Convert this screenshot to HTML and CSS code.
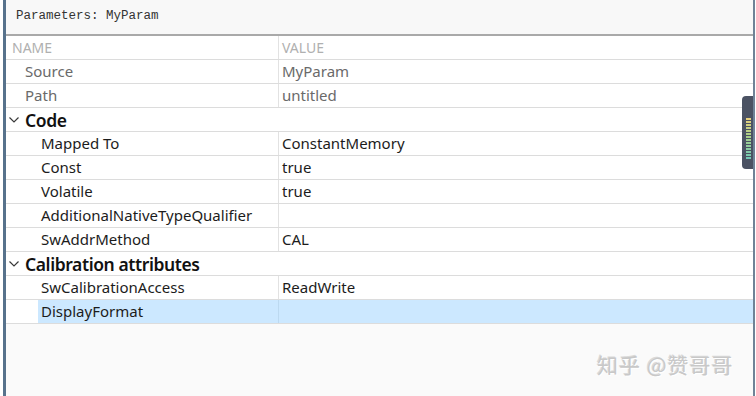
FILE: index.html
```html
<!DOCTYPE html>
<html lang="en">
<head>
  <meta charset="UTF-8">
  <title>Parameters: MyParam</title>
  <link rel="stylesheet" href="styles.css">
</head>
<body>
  <div class="panel">
    <div class="title">Parameters: MyParam</div>

    <div class="grid">
      <div class="row head">
        <div class="name">NAME</div>
        <div class="value">VALUE</div>
      </div>
      <div class="row info">
        <div class="name lvl1">Source</div>
        <div class="value">MyParam</div>
      </div>
      <div class="row info">
        <div class="name lvl1">Path</div>
        <div class="value">untitled</div>
      </div>

      <div class="row group">
        <div class="name">
          <svg class="chev" width="10" height="6" viewBox="0 0 10 6"><path d="M0.5 0.5 L5 5 L9.5 0.5" fill="none" stroke="#3a3a3a" stroke-width="1.2"/></svg>Code
        </div>
      </div>
      <div class="row">
        <div class="name lvl2">Mapped To</div>
        <div class="value">ConstantMemory</div>
      </div>
      <div class="row">
        <div class="name lvl2">Const</div>
        <div class="value">true</div>
      </div>
      <div class="row">
        <div class="name lvl2">Volatile</div>
        <div class="value">true</div>
      </div>
      <div class="row">
        <div class="name lvl2">AdditionalNativeTypeQualifier</div>
        <div class="value"></div>
      </div>
      <div class="row">
        <div class="name lvl2">SwAddrMethod</div>
        <div class="value">CAL</div>
      </div>

      <div class="row group">
        <div class="name">
          <svg class="chev" width="10" height="6" viewBox="0 0 10 6"><path d="M0.5 0.5 L5 5 L9.5 0.5" fill="none" stroke="#3a3a3a" stroke-width="1.2"/></svg>Calibration attributes
        </div>
      </div>
      <div class="row">
        <div class="name lvl2">SwCalibrationAccess</div>
        <div class="value">ReadWrite</div>
      </div>
      <div class="row selected">
        <div class="name lvl2">DisplayFormat</div>
        <div class="value"></div>
      </div>
    </div>

    <div class="thumb"><div class="bars"></div></div>
    <div class="mark">知乎 @赞哥哥</div>
  </div>
</body>
</html>
```

FILE: styles.css
```css
body {
  margin: 0;
  font-family: "Noto Sans", "Open Sans", sans-serif;
  background: #fff;
}

.panel {
  position: relative;
  height: 396px;
  margin-left: 3px;
  margin-right: 1px;
  border-left: 3px solid #57728c;
  border-right: 2px solid #6f8397;
  background: #fafafa;
  overflow: hidden;
}

.title {
  height: 34px;
  padding-left: 10px;
  line-height: 33px;
  font-family: "Liberation Mono", monospace;
  font-size: 12.5px;
  color: #333;
  background: #f8f8f8;
  border-bottom: 2px solid #a9a9a9;
}

.grid {
  background: #fff;
}

.row {
  display: grid;
  grid-template-columns: 273px 1fr;
  height: 23px;
  border-bottom: 1px solid #dcdcdc;
  font-size: 15px;
  line-height: 23px;
  color: #1c1c1c;
}

.row .name {
  white-space: nowrap;
  border-right: 1px solid #e2e2e2;
}

.row .value {
  padding-left: 3px;
}

.head {
  font-size: 14px;
  color: #b0b0b0;
}
.head .name { padding-left: 6px; }

.info { color: #6a6a6a; }

.lvl1 { padding-left: 19px; }
.lvl2 { padding-left: 35px; }

.group .name {
  display: flex;
  align-items: center;
  border-right: none;
  font-size: 17.5px;
  font-weight: 600;
  letter-spacing: -0.4px;
  line-height: 22px;
  color: #111;
  padding-left: 3px;
}

.chev {
  margin: 0 6px 0 0;
  flex: none;
}

.selected .name {
  background: linear-gradient(to right, #fff 32px, #cce8ff 32px);
  border-right-color: #bcd9f0;
}
.selected .value { background: #cce8ff; }

.thumb {
  position: absolute;
  right: 0;
  top: 96px;
  width: 11px;
  height: 73px;
  background: #4b5263;
  border-radius: 4px 0 0 4px;
}

.bars {
  margin: 22px 0 0 4px;
  width: 5px;
  height: 42px;
  background:
    repeating-linear-gradient(to bottom, transparent 0 2px, #4b5263 2px 3px),
    linear-gradient(to bottom, #e9cf7c, #a6cf8a 45%, #6fc7b8);
}

.mark {
  position: absolute;
  left: 591px;
  top: 349px;
  font-family: "Noto Sans CJK SC", sans-serif;
  font-size: 21px;
  letter-spacing: 1px;
  color: #c8c8c8;
  text-shadow: 1px 1px 0 #fff, -1px -1px 0 #dadada;
}
```
